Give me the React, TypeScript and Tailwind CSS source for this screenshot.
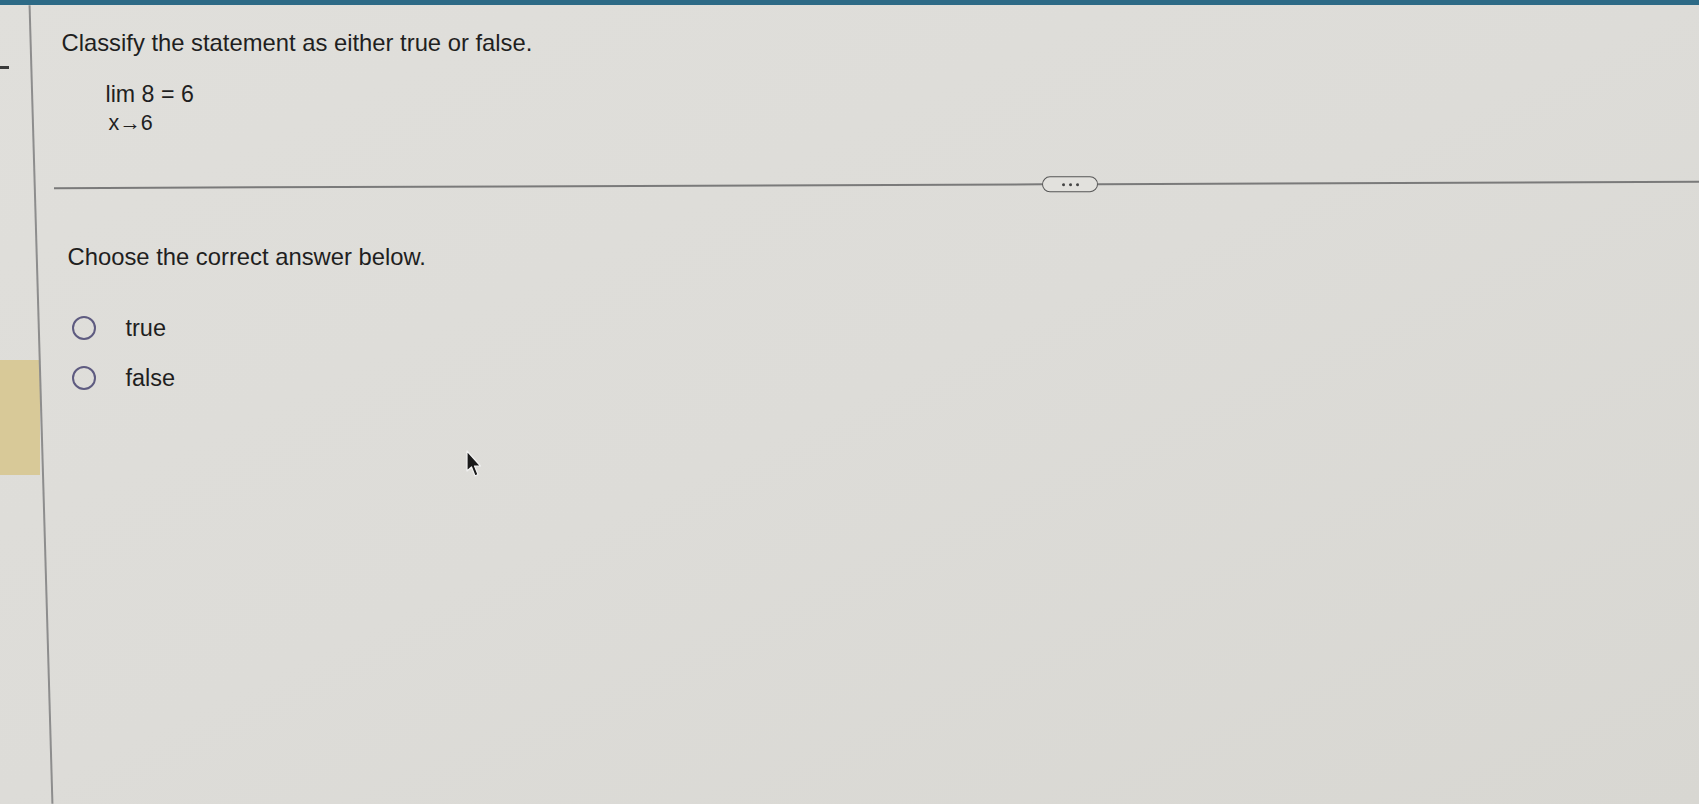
import React from "react";

function Radio({ label }: { label: string }) {
  return (
    <div className="flex items-center h-[28px]">
      <div className="w-[24px] h-[24px] rounded-full border-[2.5px] border-[#5e5b80] shrink-0" />
      <span className="ml-[30px] text-[23.5px] leading-[28px] text-[#1f1f1f]">{label}</span>
    </div>
  );
}

export default function App() {
  return (
    <div
      className="relative w-full h-[804px] overflow-hidden bg-linear-to-br from-[#e0dfdb] via-[#dddcd8] to-[#d8d7d2] flex flex-col"
      style={{ fontFamily: '"Liberation Sans", Arial, sans-serif' }}
    >
      <div className="h-[5px] bg-[#2d6a86] shrink-0" />
      <div className="flex flex-1">
        {/* left rail */}
        <div className="w-[40px] shrink-0 flex flex-col">
          <div className="h-[61px]" />
          <div className="h-[3px] w-[9px] bg-[#3a3a3a]" />
          <div className="h-[291px]" />
          <div className="h-[115px] bg-[#d8c998]" />
        </div>
        <div className="w-[1.5px] bg-[#8d8d8d] shrink-0 rotate-[-1.64deg]" />
        {/* main */}
        <div className="flex-1 flex flex-col text-[#1f1f1f]">
          <div className="pl-[20px] pt-[24px] text-[23.8px] leading-[28px]">
            Classify the statement as either true or false.
          </div>
          <div className="pl-[64px] pt-[24px] text-[23.2px] leading-[26px]">lim 8 = 6</div>
          <div className="pl-[67px] pt-[4px] text-[21.5px] leading-[24px]">x→6</div>
          {/* divider */}
          <div className="flex items-center pl-[12px] mt-[42px] h-[16px] rotate-[-0.22deg]">
            <div className="w-[988px] h-[1.5px] bg-[#7a7a7a]" />
            <div className="w-[56px] h-[16px] rounded-full border-[1.5px] border-[#555] flex items-center justify-center gap-[4px] bg-[#e2e1dd] shrink-0">
              <span className="w-[3px] h-[3px] rounded-full bg-[#444]" />
              <span className="w-[3px] h-[3px] rounded-full bg-[#444]" />
              <span className="w-[3px] h-[3px] rounded-full bg-[#444]" />
            </div>
            <div className="flex-1 h-[1.5px] bg-[#7a7a7a]" />
          </div>
          <div className="pl-[26px] pt-[50px] text-[23.8px] leading-[28px]">
            Choose the correct answer below.
          </div>
          <div className="pl-[30px] pt-[43px] flex flex-col gap-[22px]">
            <Radio label="true" />
            <Radio label="false" />
          </div>
        </div>
      </div>
      {/* mouse cursor */}
      <svg
        className="absolute left-[465px] top-[450px]"
        width="18"
        height="30"
        viewBox="0 0 18 30"
      >
        <path
          d="M2 1 L2 21 L6.5 17 L10 26 L13 24.5 L9.5 16 L15.5 16 Z"
          fill="#1a1a1a"
          stroke="#f2f2f2"
          strokeWidth="1.2"
          strokeLinejoin="round"
        />
      </svg>
    </div>
  );
}
